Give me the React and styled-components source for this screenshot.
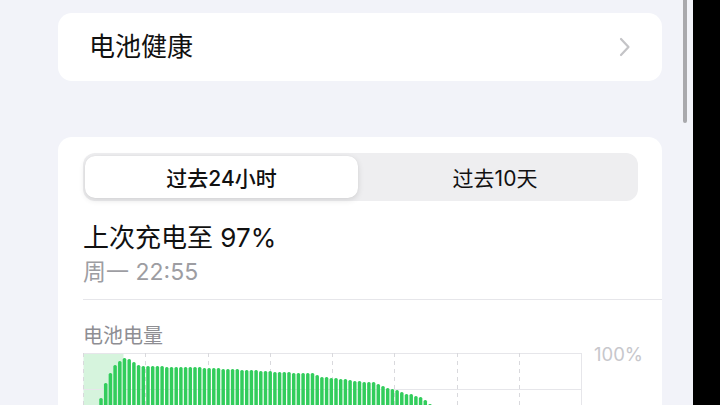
import React from "react";
import styled, { createGlobalStyle } from "styled-components";

const GlobalStyle = createGlobalStyle`
  html, body {
    margin: 0;
    padding: 0;
  }
  body {
    width: 720px;
    height: 405px;
    overflow: hidden;
    background: #000;
    font-family: Inter, "Noto Sans CJK SC", sans-serif;
    -webkit-font-smoothing: antialiased;
  }
`;

const Screen = styled.div`
  display: flex;
  width: 720px;
  height: 405px;
  overflow: hidden;
`;

const Page = styled.div`
  position: relative;
  flex: 0 0 693px;
  box-sizing: border-box;
  padding: 13px 31px 0 58px;
  background: #f2f3f9;
  display: flex;
  flex-direction: column;
  gap: 56px;
`;

const Scrollbar = styled.div`
  position: absolute;
  top: 0;
  right: 6px;
  width: 4px;
  height: 123px;
  border-radius: 0 0 2px 2px;
  background: #a9a9ad;
`;

const Bezel = styled.div`
  flex: 1;
  background: #000;
`;

const Card = styled.div`
  background: #fff;
  border-radius: 14px;
`;

const LinkRow = styled(Card)`
  height: 68px;
  flex-shrink: 0;
  display: flex;
  align-items: center;
  justify-content: space-between;
  padding: 0 31px 0 31px;
`;

const RowTitle = styled.span`
  font-size: 26px;
  line-height: 32px;
  color: #111;
`;

const UsageCard = styled(Card)`
  flex-shrink: 0;
  height: 400px;
  padding: 16px 0 0 25px;
  display: flex;
  flex-direction: column;
`;

const Segmented = styled.div`
  margin-right: 24px;
  height: 48px;
  box-sizing: border-box;
  padding: 3px 6px 3px 2px;
  border-radius: 12px;
  background: #eeeef0;
  display: grid;
  grid-template-columns: 273px 1fr;
`;

const Segment = styled.div`
  display: flex;
  align-items: center;
  justify-content: center;
  border-radius: 10px;
  font-size: 21px;
  font-weight: ${(p) => (p.$active ? 500 : 400)};
  color: #111;
  background: ${(p) => (p.$active ? "#fff" : "transparent")};
  box-shadow: ${(p) =>
    p.$active ? "0 2px 6px rgba(0,0,0,0.12), 0 0 1px rgba(0,0,0,0.08)" : "none"};
`;

const Title = styled.div`
  margin-top: 21px;
  font-size: 26px;
  line-height: 32px;
  color: #111;
`;

const Subtitle = styled.div`
  margin-top: 4px;
  font-size: 23px;
  line-height: 28px;
  color: #9d9da2;
`;

const Divider = styled.div`
  margin-top: 13px;
  height: 1px;
  background: #e6e6ea;
`;

const ChartLabel = styled.div`
  margin-top: 23px;
  font-size: 20px;
  line-height: 26px;
  color: #8e8e93;
`;

const ChartRow = styled.div`
  margin-top: 4px;
  display: flex;
  align-items: flex-start;
  gap: 12px;
`;

const AxisLabel = styled.span`
  margin-top: -10px;
  font-size: 18.5px;
  line-height: 22px;
  color: #c7c7cc;
`;

const Chevron = () => (
  <svg width="12" height="20" viewBox="0 0 12 20">
    <path
      d="M2 2 L9.5 10 L2 18"
      fill="none"
      stroke="#c4c4c7"
      strokeWidth="2.2"
      strokeLinecap="round"
      strokeLinejoin="round"
    />
  </svg>
);

// keypoints measured on the page: [x, bar top]
const KEYS = [
  [101, 398], [105.7, 383], [110.4, 373], [115.1, 365], [119.8, 361],
  [124.5, 358], [129.2, 359], [133.9, 362], [138.6, 364.5], [143.3, 366],
  [200, 367.5], [250, 370], [280, 372], [315, 373.5], [322, 377],
  [345, 379], [360, 381.5], [376, 382.5], [385, 387], [394, 389],
  [403, 393], [413, 394.5], [422, 398], [432, 405], [470, 420],
];

const topAt = (x) => {
  for (let i = 0; i < KEYS.length - 1; i++) {
    const [x0, y0] = KEYS[i];
    const [x1, y1] = KEYS[i + 1];
    if (x >= x0 - 0.01 && x <= x1 + 0.01) {
      return y0 + ((y1 - y0) * (x - x0)) / (x1 - x0);
    }
  }
  return null;
};

const CHART_X = 83;
const CHART_Y = 353;
const W = 498;
const H = 144;
const PITCH = 4.7;

const bars = [];
for (let i = 0; ; i++) {
  const x = 101 + i * PITCH;
  if (x > 470) break;
  const top = topAt(x);
  if (top == null) break;
  bars.push({ x: x - CHART_X, y: Math.round(top) - CHART_Y });
}

const BatteryChart = () => (
  <svg width={W + 1} height={H + 1} viewBox={`0 0 ${W + 1} ${H + 1}`}>
    <rect x="0.5" y="0" width="40" height={H} fill="#d6f4dd" />
    {[0, 36, 72, 108, 144].map((y) => (
      <line key={y} x1="0" x2={W} y1={y + 0.5} y2={y + 0.5} stroke="#e6e6ea" strokeWidth="1" />
    ))}
    {[0, 1, 2, 3, 4, 5, 6, 7].map((k) => (
      <line
        key={k}
        x1={Math.round(k * 62.25) + 0.5}
        x2={Math.round(k * 62.25) + 0.5}
        y1="0"
        y2={H}
        stroke="#d9d9dd"
        strokeWidth="1"
        strokeDasharray="4 4"
      />
    ))}
    <line x1={W + 0.5} x2={W + 0.5} y1="0" y2={H} stroke="#e6e6ea" strokeWidth="1" />
    {bars.map((b, i) => (
      <rect
        key={i}
        x={b.x - 1.75}
        y={b.y}
        width="3.5"
        height={H - b.y}
        rx="1.6"
        fill="#32cd5c"
      />
    ))}
  </svg>
);

export default function App() {
  return (
    <Screen>
      <GlobalStyle />
      <Page>
        <Scrollbar />
        <LinkRow>
          <RowTitle>电池健康</RowTitle>
          <Chevron />
        </LinkRow>
        <UsageCard>
          <Segmented>
            <Segment $active>过去24小时</Segment>
            <Segment>过去10天</Segment>
          </Segmented>
          <Title>上次充电至 97%</Title>
          <Subtitle>周一 22:55</Subtitle>
          <Divider />
          <ChartLabel>电池电量</ChartLabel>
          <ChartRow>
            <BatteryChart />
            <AxisLabel>100%</AxisLabel>
          </ChartRow>
        </UsageCard>
      </Page>
      <Bezel />
    </Screen>
  );
}
